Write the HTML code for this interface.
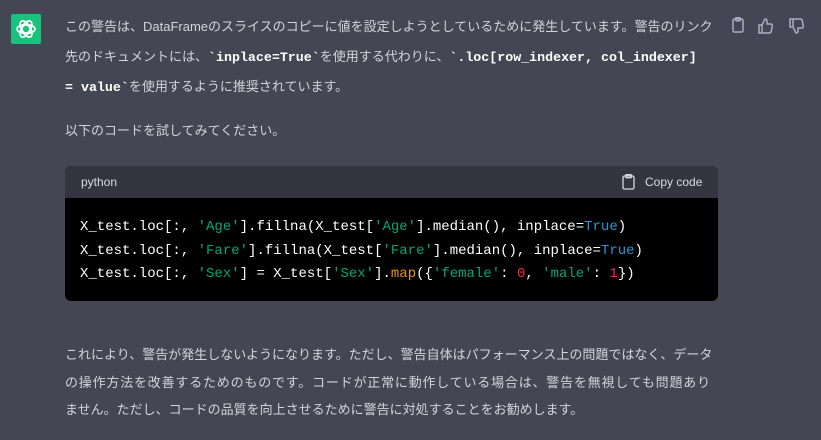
<!DOCTYPE html>
<html><head><meta charset="utf-8"><style>
body{margin:0;width:821px;height:440px;background:#444654;overflow:hidden;font-family:"Liberation Sans","Noto Sans CJK JP",sans-serif;color:#d1d5db;font-size:13px;position:relative}
.t{position:absolute;left:65px;white-space:nowrap;line-height:20px}
code{font-family:"Liberation Mono",monospace;font-weight:bold;color:#fff;font-size:13.3px}
.logo{position:absolute;left:11px;top:14px;width:30px;height:30px;background:#19c37d;border-radius:2px}
.cb{position:absolute;left:65px;top:166px;width:653px;height:135px;background:#000;border-radius:6px;overflow:hidden}
.hd{height:32px;background:#343541;font-size:12px;color:#d9d9e3;position:relative}
.hd span{position:absolute;top:9px}
pre{margin:0;position:absolute;left:15px;top:50px;font-family:"Liberation Mono",monospace;font-size:14px;line-height:23.5px;color:#fff}
.s{color:#00a67d}.k{color:#2e95d3}.f{color:#f22c3d}.m{color:#df3079}.o{color:#e9950c}
</style></head><body>
<div class="logo"><svg width="30" height="30" viewBox="0 0 30 30"><g fill="none" stroke="#fff" stroke-width="1.6"><circle cx="15" cy="15" r="4"/><ellipse cx="15" cy="15" rx="9" ry="4.5"/><ellipse cx="15" cy="15" rx="9" ry="4.5" transform="rotate(60 15 15)"/><ellipse cx="15" cy="15" rx="9" ry="4.5" transform="rotate(120 15 15)"/></g></svg></div>
<div class="t" style="top:17px">この警告は、DataFrameのスライスのコピーに値を設定しようとしているために発生しています。警告のリンク</div>
<div class="t" style="top:47px">先のドキュメントには、<code>`inplace=True`</code>を使用する代わりに、<code>`.loc[row_indexer, col_indexer]</code></div>
<div class="t" style="top:77px"><code>= value`</code>を使用するように推奨されています。</div>
<div class="t" style="top:121px">以下のコードを試してみてください。</div>
<svg style="position:absolute;left:731px;top:17px" width="80" height="18" viewBox="0 0 80 18" fill="none" stroke="#acacbe" stroke-width="1.5"><rect x="2" y="2" width="10" height="13" rx="1.5"/><rect x="4.5" y="0.8" width="5" height="3" rx="1"/><path d="M31 8v8h-3V8zM31 8l3-6c1.5 0 2 1 2 2v3h4c1 0 1.5 1 1.3 2l-1 5c-.2 1-1 2-2 2H31"/><path d="M62 10V2h-3v8zM62 10l3 6c1.5 0 2-1 2-2v-3h4c1 0 1.5-1 1.3-2l-1-5c-.2-1-1-2-2-2H62"/></svg>
<div class="cb"><div class="hd"><span style="left:16px">python</span>
<svg style="position:absolute;left:557px;top:8px" width="13" height="16" viewBox="0 0 13 16" fill="none" stroke="#d9d9e3" stroke-width="1.3"><rect x="1" y="2" width="11" height="13" rx="1.5"/><rect x="3.5" y="0.7" width="6" height="3" rx="1"/></svg>
<span style="left:580px">Copy code</span></div>
<pre>X_test.loc[:, <span class="s">'Age'</span>].fillna(X_test[<span class="s">'Age'</span>].median(), inplace=<span class="k">True</span>)
X_test.loc[:, <span class="s">'Fare'</span>].fillna(X_test[<span class="s">'Fare'</span>].median(), inplace=<span class="k">True</span>)
X_test.loc[:, <span class="s">'Sex'</span>] = X_test[<span class="s">'Sex'</span>].<span class="o">map</span>({<span class="s">'female'</span>: <span class="f">0</span>, <span class="s">'male'</span>: <span class="m">1</span>})</pre></div>
<div class="t" style="top:345px">これにより、警告が発生しないようになります。ただし、警告自体はパフォーマンス上の問題ではなく、データ</div>
<div class="t" style="top:373px;letter-spacing:0.8px">の操作方法を改善するためのものです。コードが正常に動作している場合は、警告を無視しても問題あり</div>
<div class="t" style="top:400px">ません。ただし、コードの品質を向上させるために警告に対処することをお勧めします。</div>
</body></html>
